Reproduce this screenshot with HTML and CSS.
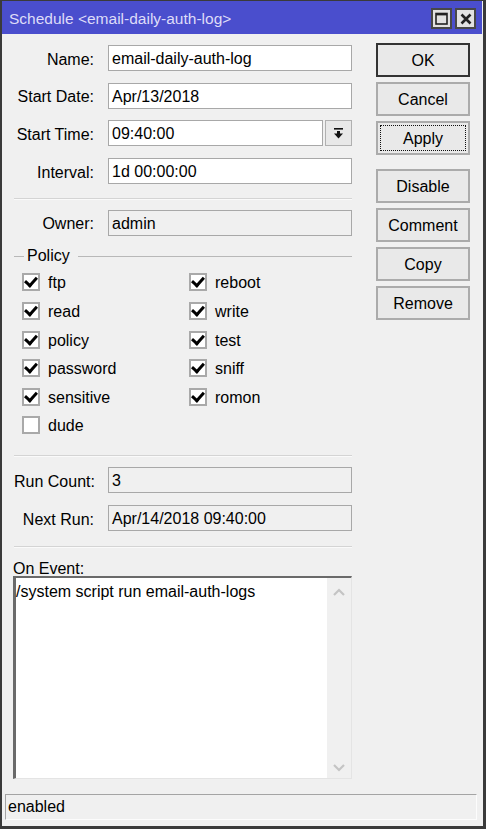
FILE: index.html
```html
<!DOCTYPE html>
<html>
<head>
<meta charset="utf-8">
<link rel="stylesheet" href="styles.css">
</head>
<body>
<div class="window">
  <div class="titlebar">
    <span class="title">Schedule &lt;email-daily-auth-log&gt;</span>
    <div class="tbtns">
      <span class="tbtn"><svg width="13" height="13" viewBox="0 0 13 13"><rect x="1" y="1.5" width="11" height="10.5" fill="none" stroke="#222" stroke-width="1.6"/><rect x="1" y="1" width="11" height="2.4" fill="#222"/></svg></span>
      <span class="tbtn"><svg width="12" height="12" viewBox="0 0 12 12"><path d="M1.5 1.5 L10.5 10.5 M10.5 1.5 L1.5 10.5" stroke="#222" stroke-width="2.6"/></svg></span>
    </div>
  </div>
  <div class="content">
    <div class="main">
      <div class="form">
        <div class="row"><span class="label">Name:</span><span class="input">email-daily-auth-log</span></div>
        <div class="row"><span class="label">Start Date:</span><span class="input">Apr/13/2018</span></div>
        <div class="row"><span class="label">Start Time:</span><span class="input short">09:40:00</span><span class="dd"><svg width="9" height="11" viewBox="0 0 9 11"><rect x="0" y="0" width="9" height="1.6" fill="#111"/><rect x="3" y="3" width="3" height="3" fill="#111"/><path d="M0 5.5 H9 L4.5 10.5 Z" fill="#111"/></svg></span></div>
        <div class="row last"><span class="label">Interval:</span><span class="input">1d 00:00:00</span></div>
        <div class="sep"></div>
        <div class="row last"><span class="label">Owner:</span><span class="input ro">admin</span></div>
        <div class="legend"><span class="legend-text">Policy</span></div>
        <div class="checks">
          <label class="chk"><span class="box on"></span>ftp</label>
          <label class="chk"><span class="box on"></span>reboot</label>
          <label class="chk"><span class="box on"></span>read</label>
          <label class="chk"><span class="box on"></span>write</label>
          <label class="chk"><span class="box on"></span>policy</label>
          <label class="chk"><span class="box on"></span>test</label>
          <label class="chk"><span class="box on"></span>password</label>
          <label class="chk"><span class="box on"></span>sniff</label>
          <label class="chk"><span class="box on"></span>sensitive</label>
          <label class="chk"><span class="box on"></span>romon</label>
          <label class="chk"><span class="box"></span>dude</label>
        </div>
        <div class="sep sep2"></div>
        <div class="row"><span class="label">Run Count:</span><span class="input ro">3</span></div>
        <div class="row last"><span class="label">Next Run:</span><span class="input ro">Apr/14/2018 09:40:00</span></div>
        <div class="sep sep3"></div>
        <div class="ev-label">On Event:</div>
        <div class="textarea">
          <div class="ta-text">/system script run email-auth-logs</div>
          <div class="scroll">
            <svg width="12" height="8" viewBox="0 0 12 8"><path d="M1 7 L6 2 L11 7" fill="none" stroke="#c4c4c4" stroke-width="2.2"/></svg>
            <svg width="12" height="8" viewBox="0 0 12 8"><path d="M1 1 L6 6 L11 1" fill="none" stroke="#c4c4c4" stroke-width="2.2"/></svg>
          </div>
        </div>
      </div>
      <div class="buttons">
        <div class="btn default">OK</div>
        <div class="btn">Cancel</div>
        <div class="btn focus">Apply</div>
        <div class="btn spaced">Disable</div>
        <div class="btn">Comment</div>
        <div class="btn">Copy</div>
        <div class="btn">Remove</div>
      </div>
    </div>
    <div class="status">enabled</div>
  </div>
</div>
</body>
</html>
```
FILE: styles.css
```css
* { box-sizing: border-box; }
body {
  margin: 0;
  background: #fff;
  font-family: "Liberation Sans", Arial, sans-serif;
  font-size: 16px;
  color: #000;
}
.window {
  width: 486px;
  height: 829px;
  background: #f0f0f0;
  border-style: solid;
  border-color: #3a3a3a;
  border-width: 1px 3px 3px 2px;
  display: flex;
  flex-direction: column;
}
.titlebar {
  height: 33px;
  flex: none;
  margin-right: 1px;
  background: #4a4ecd;
  display: flex;
  align-items: center;
  justify-content: space-between;
  padding: 0 6px 0 7px;
}
.title {
  color: #dedcf8;
  font-size: 15.5px;
  padding-top: 3px;
}
.tbtns {
  display: flex;
  gap: 3px;
  margin-top: 2px;
}
.tbtn {
  width: 21px;
  height: 21px;
  background: #e2e2e2;
  border: 2px solid #484848;
  display: flex;
  align-items: center;
  justify-content: center;
}
.content {
  flex: 1;
  display: flex;
  flex-direction: column;
}
.main {
  flex: 1;
  display: flex;
  padding-left: 12px;
}
.form {
  width: 338px;
  padding-top: 11px;
  display: flex;
  flex-direction: column;
}
.row {
  display: flex;
  align-items: center;
  height: 26px;
  margin-bottom: 11.7px;
  flex: none;
}
.label {
  width: 80px;
  margin-right: 14px;
  text-align: right;
  white-space: nowrap;
  padding-top: 3px;
}
.input {
  width: 244px;
  height: 26px;
  border: 1px solid #a8a8a8;
  background: #fff;
  padding: 2px 3px 0;
  line-height: 22px;
  white-space: nowrap;
}
.input.short { width: 215px; }
.input.ro { background: #f0f0f0; }
.dd {
  width: 27px;
  height: 26px;
  margin-left: 2px;
  background: #e8e8e8;
  border: 1px solid #b0b0b0;
  display: flex;
  align-items: center;
  justify-content: center;
}
.sep {
  height: 2px;
  border-top: 1px solid #d4d4d4;
  border-bottom: 1px solid #fafafa;
  margin: 2px 0 10px;
  flex: none;
}
.legend {
  display: flex;
  align-items: center;
  height: 18px;
  flex: none;
}
.legend::before {
  content: "";
  width: 10px;
  border-top: 1px solid #b8b8b8;
  margin-right: 3px;
}
.legend::after {
  content: "";
  flex: 1;
  border-top: 1px solid #b8b8b8;
  margin-left: 8px;
}
.checks {
  margin-top: 8px;
  padding-left: 8px;
  display: grid;
  grid-template-columns: 167px 167px;
  grid-auto-rows: 18px;
  row-gap: 10.6px;
}
.chk {
  display: flex;
  align-items: center;
  height: 18px;
  padding-top: 2px;
}
.box {
  width: 18px;
  height: 18px;
  margin-right: 8px;
  margin-top: -2px;
  background: #fff;
  border: 2px solid #a9a9a9;
  display: flex;
  align-items: center;
  justify-content: center;
}
.box.on::after {
  content: "";
  width: 9px;
  height: 5px;
  border-left: 3px solid #000;
  border-bottom: 3px solid #000;
  transform: translate(0, -1.5px) rotate(-48deg);
}
.sep2 { margin-top: 21px; }
.sep3 { margin-top: 3px; margin-bottom: 11px; }
.ev-label {
  margin-left: -1px;
  line-height: 17px;
  height: 17px;
  padding-top: 1px;
}
.textarea {
  margin-left: -1px;
  width: 339px;
  height: 203px;
  border-style: solid;
  border-width: 2px 1px 1px 3px;
  border-color: #6a6a6a #e4e4e4 #e4e4e4 #6a6a6a;
  display: flex;
}
.ta-text {
  flex: 1;
  background: #fff;
  padding: 5px 1px 0 0;
  line-height: 18px;
  white-space: nowrap;
}
.scroll {
  width: 24px;
  background: #f0f0f0;
  display: flex;
  flex-direction: column;
  justify-content: space-between;
  align-items: center;
  padding: 10px 0 6px;
}
.buttons {
  width: 94px;
  margin-left: 24px;
  padding-top: 9px;
  display: flex;
  flex-direction: column;
  gap: 5px;
}
.btn {
  height: 34px;
  background: #e9e9e9;
  border: 2px solid #ababab;
  display: flex;
  align-items: center;
  justify-content: center;
  padding-top: 2px;
}
.btn.default { border-color: #333; }
.btn.focus { outline: 1px dotted #111; outline-offset: -5px; }
.btn.spaced { margin-top: 9px; }
.status {
  flex: none;
  height: 26px;
  margin: 0 6px 6px 3px;
  border-style: solid;
  border-width: 1px;
  border-color: #a4a4a4 #fcfcfc #fcfcfc #a4a4a4;
  padding-left: 2px;
  line-height: 24px;
}
```
